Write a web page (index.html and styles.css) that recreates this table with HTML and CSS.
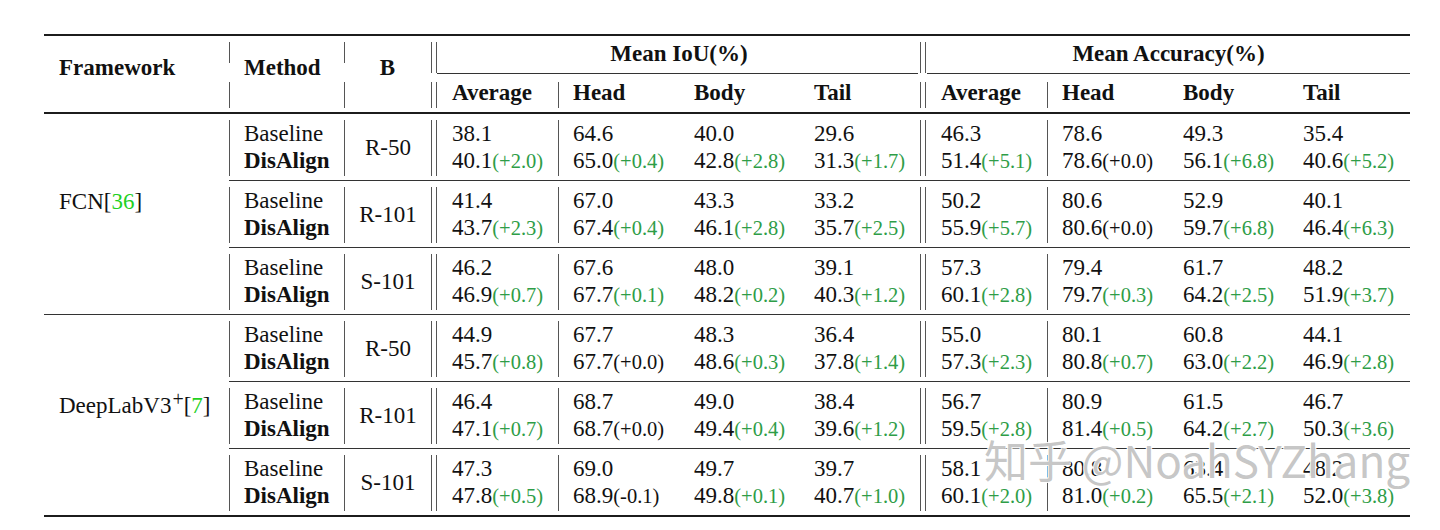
FILE: index.html
```html
<!DOCTYPE html>
<html>
<head>
<meta charset="utf-8">
<link rel="stylesheet" href="styles.css">
</head>
<body>
<div class="page">
<div class="tbl">
  <div class="rule top"></div>
  <div class="hd fw">Framework</div>
  <div class="hd method">Method</div>
  <div class="hd bb">B</div>
  <div class="grp iou">Mean IoU(%)</div>
  <div class="grp acc">Mean Accuracy(%)</div>
  <div class="cline c-iou"></div>
  <div class="cline c-acc"></div>
  <div class="h2 dbl">Average</div>
  <div class="h2 sep">Head</div>
  <div class="h2">Body</div>
  <div class="h2">Tail</div>
  <div class="h2 dbl">Average</div>
  <div class="h2 sep">Head</div>
  <div class="h2">Body</div>
  <div class="h2">Tail</div>
  <div class="rule r5"></div>

  <div class="fwc fcn">FCN[<span class="cite">36</span>]</div>
  <div class="rule s7"></div>
  <div class="rule s9"></div>
  <div class="rule r11"></div>
  <div class="fwc dlab">DeepLabV3<span class="sup">+</span>[<span class="cite">7</span>]</div>
  <div class="rule s13"></div>
  <div class="rule s15"></div>
  <div class="rule bottom"></div>

  <!-- FCN R-50 -->
  <div class="c m">Baseline<br><b>DisAlign</b></div>
  <div class="c bk">R-50</div>
  <div class="c dbl">38.1<br>40.1<span class="d">(+2.0)</span></div>
  <div class="c sep">64.6<br>65.0<span class="d">(+0.4)</span></div>
  <div class="c">40.0<br>42.8<span class="d">(+2.8)</span></div>
  <div class="c">29.6<br>31.3<span class="d">(+1.7)</span></div>
  <div class="c dbl">46.3<br>51.4<span class="d">(+5.1)</span></div>
  <div class="c sep">78.6<br>78.6<span class="k">(+0.0)</span></div>
  <div class="c">49.3<br>56.1<span class="d">(+6.8)</span></div>
  <div class="c">35.4<br>40.6<span class="d">(+5.2)</span></div>

  <!-- FCN R-101 -->
  <div class="c m">Baseline<br><b>DisAlign</b></div>
  <div class="c bk">R-101</div>
  <div class="c dbl">41.4<br>43.7<span class="d">(+2.3)</span></div>
  <div class="c sep">67.0<br>67.4<span class="d">(+0.4)</span></div>
  <div class="c">43.3<br>46.1<span class="d">(+2.8)</span></div>
  <div class="c">33.2<br>35.7<span class="d">(+2.5)</span></div>
  <div class="c dbl">50.2<br>55.9<span class="d">(+5.7)</span></div>
  <div class="c sep">80.6<br>80.6<span class="k">(+0.0)</span></div>
  <div class="c">52.9<br>59.7<span class="d">(+6.8)</span></div>
  <div class="c">40.1<br>46.4<span class="d">(+6.3)</span></div>

  <!-- FCN S-101 -->
  <div class="c m">Baseline<br><b>DisAlign</b></div>
  <div class="c bk">S-101</div>
  <div class="c dbl">46.2<br>46.9<span class="d">(+0.7)</span></div>
  <div class="c sep">67.6<br>67.7<span class="d">(+0.1)</span></div>
  <div class="c">48.0<br>48.2<span class="d">(+0.2)</span></div>
  <div class="c">39.1<br>40.3<span class="d">(+1.2)</span></div>
  <div class="c dbl">57.3<br>60.1<span class="d">(+2.8)</span></div>
  <div class="c sep">79.4<br>79.7<span class="d">(+0.3)</span></div>
  <div class="c">61.7<br>64.2<span class="d">(+2.5)</span></div>
  <div class="c">48.2<br>51.9<span class="d">(+3.7)</span></div>

  <!-- DeepLab R-50 -->
  <div class="c m">Baseline<br><b>DisAlign</b></div>
  <div class="c bk">R-50</div>
  <div class="c dbl">44.9<br>45.7<span class="d">(+0.8)</span></div>
  <div class="c sep">67.7<br>67.7<span class="k">(+0.0)</span></div>
  <div class="c">48.3<br>48.6<span class="d">(+0.3)</span></div>
  <div class="c">36.4<br>37.8<span class="d">(+1.4)</span></div>
  <div class="c dbl">55.0<br>57.3<span class="d">(+2.3)</span></div>
  <div class="c sep">80.1<br>80.8<span class="d">(+0.7)</span></div>
  <div class="c">60.8<br>63.0<span class="d">(+2.2)</span></div>
  <div class="c">44.1<br>46.9<span class="d">(+2.8)</span></div>

  <!-- DeepLab R-101 -->
  <div class="c m">Baseline<br><b>DisAlign</b></div>
  <div class="c bk">R-101</div>
  <div class="c dbl">46.4<br>47.1<span class="d">(+0.7)</span></div>
  <div class="c sep">68.7<br>68.7<span class="k">(+0.0)</span></div>
  <div class="c">49.0<br>49.4<span class="d">(+0.4)</span></div>
  <div class="c">38.4<br>39.6<span class="d">(+1.2)</span></div>
  <div class="c dbl">56.7<br>59.5<span class="d">(+2.8)</span></div>
  <div class="c sep">80.9<br>81.4<span class="d">(+0.5)</span></div>
  <div class="c">61.5<br>64.2<span class="d">(+2.7)</span></div>
  <div class="c">46.7<br>50.3<span class="d">(+3.6)</span></div>

  <!-- DeepLab S-101 -->
  <div class="c m">Baseline<br><b>DisAlign</b></div>
  <div class="c bk">S-101</div>
  <div class="c dbl">47.3<br>47.8<span class="d">(+0.5)</span></div>
  <div class="c sep">69.0<br>68.9<span class="k">(-0.1)</span></div>
  <div class="c">49.7<br>49.8<span class="d">(+0.1)</span></div>
  <div class="c">39.7<br>40.7<span class="d">(+1.0)</span></div>
  <div class="c dbl">58.1<br>60.1<span class="d">(+2.0)</span></div>
  <div class="c sep">80.8<br>81.0<span class="d">(+0.2)</span></div>
  <div class="c">63.4<br>65.5<span class="d">(+2.1)</span></div>
  <div class="c">48.2<br>52.0<span class="d">(+3.8)</span></div>
</div>
<div class="watermark">知乎 @NoahSYZhang</div>
</div>
</body>
</html>
```

FILE: styles.css
```css
html, body {
  margin: 0;
  padding: 0;
  background: #ffffff;
}

.page {
  position: relative;
  width: 1440px;
  height: 530px;
  overflow: hidden;
  font-family: "Liberation Serif", "Times New Roman", serif;
  font-size: 23px;
  color: #111111;
}

.tbl {
  display: grid;
  grid-template-columns: 185px 115px 87px 127px 121px 120px 121px 127px 121px 120px 122px;
  grid-template-rows: 2px 37px 1px 38px 2px 66px 1px 66px 1px 66px 1px 66px 1px 66px 1px 66px 2px;
  width: 1366px;
  margin: 34px 0 0 44px;
}

/* horizontal rules */
.rule { background: #1c1c1c; grid-column: 1 / 12; }
.rule.top { grid-row: 1; }
.rule.r5 { grid-row: 5; }
.rule.s7 { grid-row: 7; grid-column: 2 / 12; background: #333; }
.rule.s9 { grid-row: 9; grid-column: 2 / 12; background: #333; }
.rule.r11 { grid-row: 11; background: #333; }
.rule.s13 { grid-row: 13; grid-column: 2 / 12; background: #333; }
.rule.s15 { grid-row: 15; grid-column: 2 / 12; background: #333; }
.rule.bottom { grid-row: 17; }

.cline { grid-row: 3; background: #333; }
.c-iou { grid-column: 4 / 8; margin: 0 2px 0 6px; }
.c-acc { grid-column: 8 / 12; margin-left: 7px; }

/* header */
.hd {
  grid-row: 2 / 5;
  display: flex;
  align-items: center;
  font-weight: bold;
  padding-bottom: 12px;
}
.fw { grid-column: 1; padding-left: 15px; }
.method, .bb {
  background:
    linear-gradient(#555, #555) 0 6px / 1px 21px no-repeat,
    linear-gradient(#555, #555) 0 46px / 1px 26px no-repeat;
}
.method { grid-column: 2; padding-left: 15px; }
.bb { grid-column: 3; justify-content: center; }

.grp {
  grid-row: 2;
  margin-top: 6px;
  display: flex;
  align-items: center;
  justify-content: center;
  font-weight: bold;
  padding: 0 0 7px 6px;
  border-left: 1px solid #555;
  background: linear-gradient(#555, #555) 4px 0 / 1px 100% no-repeat;
}
.iou { grid-column: 4 / 8; }
.acc { grid-column: 8 / 12; }

.h2 {
  display: flex;
  align-items: center;
  font-weight: bold;
  margin: 8px 0 4px;
  padding-left: 15px;
  padding-bottom: 4px;
}

/* framework labels */
.fwc {
  display: flex;
  align-items: center;
  grid-column: 1;
  padding-left: 15px;
}
.fcn { grid-row: 6 / 11; padding-bottom: 24px; }
.dlab { grid-row: 12 / 17; padding-bottom: 18px; }
.fwc .sup {
  font-size: 20px;
  line-height: 1;
  align-self: center;
  margin-top: -15px;
  margin-left: 1px;
}
.cite { color: #1fd01f; }

/* data cells */
.c {
  margin: 6px 0 4px;
  line-height: 27px;
  padding-left: 15px;
  white-space: nowrap;
}
.c.m { border-left: 1px solid #555; padding-left: 14px; }
.c.bk {
  border-left: 1px solid #555;
  display: flex;
  align-items: center;
  justify-content: center;
  padding-left: 0;
  padding-bottom: 1px;
}

.dbl {
  border-left: 1px solid #555;
  background: linear-gradient(#555, #555) 4px 0 / 1px 100% no-repeat;
  padding-left: 20px;
}
.sep {
  border-left: 1px solid #555;
  padding-left: 14px;
}

.d { color: #2e9d47; font-size: 20.5px; }
.k { font-size: 20.5px; }

/* watermark overlay */
.watermark {
  position: absolute;
  left: 984px;
  top: 437px;
  font-family: "Noto Sans CJK SC", "Noto Sans", sans-serif;
  font-size: 44px;
  line-height: 1;
  color: rgba(150, 150, 150, 0.55);
  white-space: nowrap;
  text-shadow: 1px 1px 0 rgba(255,255,255,0.8), -1px -1px 0 rgba(255,255,255,0.8), 1px -1px 0 rgba(255,255,255,0.8), -1px 1px 0 rgba(255,255,255,0.8);
  pointer-events: none;
}
```
